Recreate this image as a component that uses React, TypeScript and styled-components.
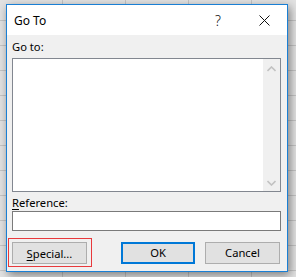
import React from "react";
import styled, { createGlobalStyle } from "styled-components";

const Global = createGlobalStyle`
  html, body { margin: 0; padding: 0; height: 100%; }
  body {
    font-family: "Noto Sans", "Open Sans", sans-serif;
    background-color: #e2e2e2;
    background-image:
      repeating-linear-gradient(to right, transparent 0 62px, #c4c4c4 62px 63px),
      repeating-linear-gradient(to bottom, transparent 0 20px, #c4c4c4 20px 21px, transparent 21px 25px);
    overflow: hidden;
  }
`;

const Desktop = styled.div`
  display: flex;
  align-items: flex-start;
  padding: 4px 0 0 6px;
  height: 277px;
  box-sizing: border-box;
`;

const Window = styled.div`
  width: 282px;
  height: 268px;
  box-sizing: border-box;
  border: 1px solid #1a7fd4;
  background: #f0f0f0;
  display: flex;
  flex-direction: column;
  box-shadow: 2px 3px 9px rgba(0, 0, 0, 0.45);
`;

const TitleBar = styled.div`
  height: 30px;
  flex: none;
  background: #ffffff;
  display: flex;
  align-items: center;
`;

const Title = styled.div`
  flex: 1;
  padding-left: 7px;
  font-size: 12px;
  color: #000;
`;

const CaptionButton = styled.div`
  width: 46px;
  height: 30px;
  display: flex;
  align-items: center;
  justify-content: center;
  font-size: 14px;
  font-weight: 300;
  color: #111;
`;

const Body = styled.div`
  flex: 1;
  display: flex;
  flex-direction: column;
  padding: 4px 6px 0 5px;
`;

const Label = styled.div<{ $gap?: number }>`
  font-size: 11.2px;
  line-height: 16px;
  height: 16px;
  color: #000;
  margin-top: ${(p) => p.$gap ?? 0}px;
  u { text-decoration: underline; text-underline-offset: 2px; }
`;

const ListBox = styled.div`
  margin-top: 3px;
  height: 134px;
  box-sizing: border-box;
  border: 1px solid #828790;
  background: #ffffff;
  display: flex;
  justify-content: flex-end;
`;

const ScrollBar = styled.div`
  width: 17px;
  background: #f0f0f0;
  display: flex;
  flex-direction: column;
  justify-content: space-between;
  align-items: center;
  padding: 7px 0 5px;
`;

const TextInput = styled.div`
  height: 20px;
  box-sizing: border-box;
  border: 1px solid #7a7a7a;
  background: #ffffff;
`;

const ButtonRow = styled.div`
  margin-top: 7px;
  display: flex;
  align-items: center;
  justify-content: space-between;
  margin-left: -4px;
`;

const Highlight = styled.div`
  border: 1px solid #e8393c;
  padding: 3px 4px 2px 3px;
  display: flex;
`;

const Group = styled.div`
  display: flex;
  gap: 10px;
  padding-right: 1px;
`;

const Button = styled.div<{ $primary?: boolean }>`
  width: ${(p) => (p.$primary ? 74 : 75)}px;
  height: 22px;
  box-sizing: border-box;
  border: ${(p) => (p.$primary ? "2px solid #0078d7" : "1px solid #adadad")};
  background: #e1e1e1;
  display: flex;
  align-items: center;
  justify-content: center;
  font-size: 11.2px;
  color: #000;
  u { text-decoration: underline; text-underline-offset: 2px; }
`;

const Chevron = ({ up }: { up?: boolean }) => (
  <svg width="9" height="6" viewBox="0 0 9 6">
    <polyline
      points={up ? "0.5,5 4.5,1 8.5,5" : "0.5,1 4.5,5 8.5,1"}
      fill="none"
      stroke="#c2c2c2"
      strokeWidth="1.6"
    />
  </svg>
);

export default function App() {
  return (
    <>
      <Global />
      <Desktop>
        <Window>
          <TitleBar>
            <Title>Go To</Title>
            <CaptionButton>?</CaptionButton>
            <CaptionButton>
              <svg width="11" height="11" viewBox="0 0 11 11">
                <path d="M0.5 0.5 L10.5 10.5 M10.5 0.5 L0.5 10.5" stroke="#111" strokeWidth="1" />
              </svg>
            </CaptionButton>
          </TitleBar>
          <Body>
            <Label>Go to:</Label>
            <ListBox>
              <ScrollBar>
                <Chevron up />
                <Chevron />
              </ScrollBar>
            </ListBox>
            <Label $gap={3}>
              <u>R</u>eference:
            </Label>
            <TextInput />
            <ButtonRow>
              <Highlight>
                <Button>
                  <u>S</u>pecial...
                </Button>
              </Highlight>
              <Group>
                <Button $primary>OK</Button>
                <Button>Cancel</Button>
              </Group>
            </ButtonRow>
          </Body>
        </Window>
      </Desktop>
    </>
  );
}
